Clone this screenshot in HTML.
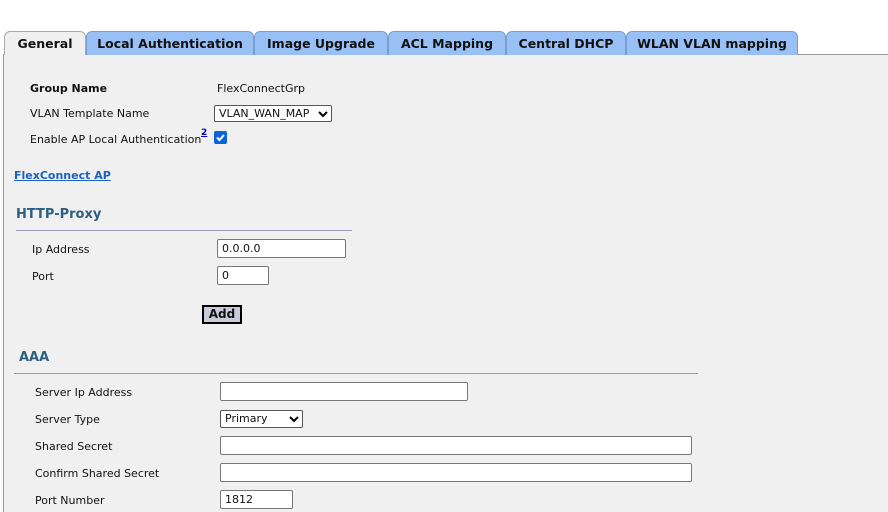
<!DOCTYPE html>
<html><head><meta charset="utf-8"><style>
*{margin:0;padding:0;box-sizing:border-box}
body{width:888px;height:512px;overflow:hidden;background:#fff;font-family:"DejaVu Sans","Liberation Sans",sans-serif;font-size:11px;color:#111;position:relative}
.a{position:absolute;white-space:nowrap}
.panel{position:absolute;left:3px;top:54px;width:885px;height:458px;background:#f0f0f0;border-left:1px solid #999;border-top:1px solid #999}
.tab{position:absolute;top:31px;height:24px;background:#99c0f5;border:1px solid #7a9cd0;border-bottom:none;border-radius:6px 6px 0 0;font-weight:bold;font-size:12.5px;text-align:center;line-height:23px;color:#111}
.tab.on{background:#f0f0f0;border-color:#aaa;height:24px;z-index:2}
.inp{position:absolute;background:#fff;border:1px solid #777;border-radius:2px;height:19px;padding-left:4px;line-height:17px;font-size:11px}
.sel{position:absolute;background:#fff;border:1px solid #555;border-radius:2px;height:17px;padding-left:4px;line-height:15px;font-size:11px}
.sel svg{position:absolute;right:3px;top:4px}
.h{position:absolute;font-weight:bold;font-size:13px;color:#2c5f80}
.line{position:absolute;height:1px;background:#9a9ab8}
</style></head><body>
<div class="panel"></div>
<div class="tab on" style="left:4px;width:82px">General</div>
<div class="tab" style="left:86px;width:168px">Local Authentication</div>
<div class="tab" style="left:254px;width:134px">Image Upgrade</div>
<div class="tab" style="left:388px;width:118px">ACL Mapping</div>
<div class="tab" style="left:506px;width:120px">Central DHCP</div>
<div class="tab" style="left:626px;width:172px">WLAN VLAN mapping</div>

<div class="a" style="left:30px;top:82px;font-weight:bold">Group Name</div>
<div class="a" style="left:217px;top:82px">FlexConnectGrp</div>
<div class="a" style="left:30px;top:107px">VLAN Template Name</div>
<div class="sel" style="left:214px;top:105px;width:118px">VLAN_WAN_MAP<svg width="10" height="8" viewBox="0 0 10 8"><path d="M1 2l4 4 4-4" stroke="#000" stroke-width="2" fill="none"/></svg></div>
<div class="a" style="left:30px;top:133px">Enable AP Local Authentication</div>
<div class="a" style="left:201px;top:128px;font-size:9px;color:#00c;text-decoration:underline;font-weight:bold">2</div>
<div class="a" style="left:214px;top:131px;width:13px;height:13px;background:#0b65d8;border-radius:2px"><svg width="13" height="13" viewBox="0 0 13 13"><path d="M3 6.5l2.5 2.5 4.5-5" stroke="#fff" stroke-width="2" fill="none"/></svg></div>

<div class="a" style="left:14px;top:169px;font-weight:bold;color:#1a62c0;text-decoration:underline">FlexConnect AP</div>

<div class="h" style="left:16px;top:207px">HTTP-Proxy</div>
<div class="line" style="left:16px;top:230px;width:336px"></div>
<div class="a" style="left:32px;top:243px">Ip Address</div>
<div class="inp" style="left:217px;top:239px;width:129px">0.0.0.0</div>
<div class="a" style="left:32px;top:270px">Port</div>
<div class="inp" style="left:217px;top:266px;width:52px">0</div>
<div class="a" style="left:202px;top:305px;width:40px;height:19px;border:2px solid #000;background:#c8ccd8;font-weight:bold;text-align:center;line-height:15px;font-size:12px">Add</div>

<div class="h" style="left:19px;top:350px">AAA</div>
<div class="line" style="left:14px;top:373px;width:684px"></div>
<div class="a" style="left:35px;top:386px">Server Ip Address</div>
<div class="inp" style="left:220px;top:382px;width:248px"></div>
<div class="a" style="left:35px;top:413px">Server Type</div>
<div class="sel" style="left:220px;top:410px;width:83px;height:18px;line-height:16px">Primary<svg width="10" height="8" viewBox="0 0 10 8"><path d="M1 2l4 4 4-4" stroke="#000" stroke-width="2" fill="none"/></svg></div>
<div class="a" style="left:35px;top:440px">Shared Secret</div>
<div class="inp" style="left:220px;top:436px;width:472px"></div>
<div class="a" style="left:35px;top:467px">Confirm Shared Secret</div>
<div class="inp" style="left:220px;top:463px;width:472px"></div>
<div class="a" style="left:35px;top:494px">Port Number</div>
<div class="inp" style="left:220px;top:490px;width:73px">1812</div>
</body></html>
